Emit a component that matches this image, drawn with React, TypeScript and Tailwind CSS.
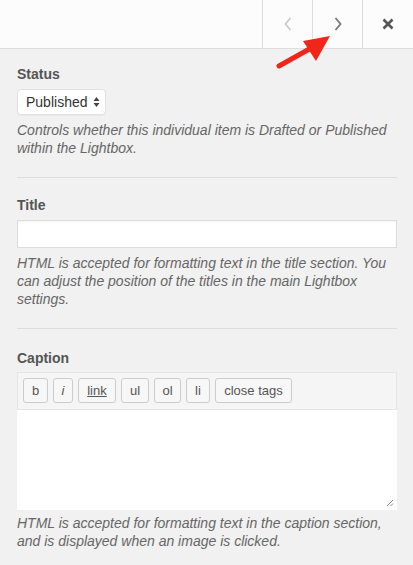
import React from "react";

export default function App() {
  const font = { fontFamily: '"Liberation Sans", Arial, Helvetica, sans-serif' };
  return (
    <div className="relative w-[413px] h-[565px] overflow-hidden bg-[#f1f1f1]" style={font}>
      {/* Header */}
      <div className="flex h-[49px] bg-[#fcfcfc] border-b border-[#dddddd]">
        <div className="flex-1" />
        <button className="w-[50px] h-full border-l border-[#dddddd] flex items-center justify-center">
          <svg width="10" height="16" viewBox="0 0 10 16">
            <path d="M7.5 2 L2.5 8 L7.5 14" fill="none" stroke="#cccccc" strokeWidth="1.8" />
          </svg>
        </button>
        <button className="w-[50px] h-full border-l border-[#dddddd] flex items-center justify-center">
          <svg width="10" height="16" viewBox="0 0 10 16">
            <path d="M2.5 2 L7.5 8 L2.5 14" fill="none" stroke="#777777" strokeWidth="1.8" />
          </svg>
        </button>
        <button className="w-[51px] h-full border-l border-[#dddddd] flex items-center justify-center">
          <svg width="12" height="12" viewBox="0 0 12 12">
            <path d="M1.5 1.5 L10.5 10.5 M10.5 1.5 L1.5 10.5" fill="none" stroke="#555555" strokeWidth="2.6" />
          </svg>
        </button>
      </div>

      {/* Content */}
      <div className="pl-[17px] pr-[16px]">
        <div className="pt-[16px] pb-[20px] border-b border-[#dddddd]">
          <div className="text-[14px] leading-[18px] font-bold text-[#555555]">Status</div>
          <div className="mt-[6px] w-[89px] h-[26px] bg-white rounded-[4px] border border-[#e2e2e2] shadow-[0_1px_1px_rgba(0,0,0,0.04)] flex items-center pl-[8px] pr-[5px] justify-between">
            <span className="text-[14px] text-[#333333]">Published</span>
            <svg width="7" height="12" viewBox="0 0 7 12">
              <path d="M3.5 1 L6.5 5 L0.5 5 Z M3.5 11 L6.5 7 L0.5 7 Z" fill="#444444" />
            </svg>
          </div>
          <p className="mt-[6px] text-[14px] leading-[18px] italic text-[#666666]">
            Controls whether this individual item is Drafted or Published within the Lightbox.
          </p>
        </div>

        <div className="pt-[18px] pb-[20px] border-b border-[#dddddd]">
          <div className="text-[14px] leading-[18px] font-bold text-[#555555]">Title</div>
          <div className="mt-[6px] h-[28px] bg-white border border-[#dddddd] shadow-[inset_0_1px_2px_rgba(0,0,0,0.05)]" />
          <p className="mt-[6px] text-[14px] leading-[18px] italic text-[#666666]">
            HTML is accepted for formatting text in the title section. You can adjust the position of the titles in the main Lightbox settings.
          </p>
        </div>

        <div className="pt-[20px]">
          <div className="text-[14px] leading-[18px] font-bold text-[#555555]">Caption</div>
          <div className="mt-[5px] h-[37px] bg-[#f5f5f5] border border-[#e5e5e5] border-b-0 flex items-start gap-[5px] pl-[5px] pt-[5px]">
            <button className="w-[25px] h-[25px] bg-[#f7f7f7] border border-[#cccccc] rounded-[3px] text-[13px] text-[#555555] flex items-center justify-center">b</button>
            <button className="w-[20px] h-[25px] bg-[#f7f7f7] border border-[#cccccc] rounded-[3px] text-[13px] italic text-[#555555] flex items-center justify-center">i</button>
            <button className="w-[38px] h-[25px] bg-[#f7f7f7] border border-[#cccccc] rounded-[3px] text-[13px] underline text-[#555555] flex items-center justify-center">link</button>
            <button className="w-[28px] h-[25px] bg-[#f7f7f7] border border-[#cccccc] rounded-[3px] text-[13px] text-[#555555] flex items-center justify-center">ul</button>
            <button className="w-[27px] h-[25px] bg-[#f7f7f7] border border-[#cccccc] rounded-[3px] text-[13px] text-[#555555] flex items-center justify-center">ol</button>
            <button className="w-[24px] h-[25px] bg-[#f7f7f7] border border-[#cccccc] rounded-[3px] text-[13px] text-[#555555] flex items-center justify-center">li</button>
            <button className="w-[77px] h-[25px] bg-[#f7f7f7] border border-[#cccccc] rounded-[3px] text-[13px] text-[#555555] flex items-center justify-center">close tags</button>
          </div>
          <div className="relative h-[101px] bg-white border-t border-[#e5e5e5]">
            <svg className="absolute right-[3px] bottom-[3px]" width="8" height="8" viewBox="0 0 8 8">
              <path d="M7 1 L1 7 M7 4.5 L4.5 7" stroke="#888888" strokeWidth="1" />
            </svg>
          </div>
          <p className="mt-[4px] text-[14px] leading-[18px] italic text-[#666666]">
            HTML is accepted for formatting text in the caption section, and is displayed when an image is clicked.
          </p>
        </div>
      </div>

      {/* Red annotation arrow */}
      <svg className="absolute left-0 top-0 pointer-events-none" width="413" height="100" viewBox="0 0 413 100">
        <path d="M279 66 L313 47" stroke="#f0261b" strokeWidth="5" strokeLinecap="round" />
        <path d="M330 36 L303 41 L316 61 Z" fill="#f0261b" />
      </svg>
    </div>
  );
}
